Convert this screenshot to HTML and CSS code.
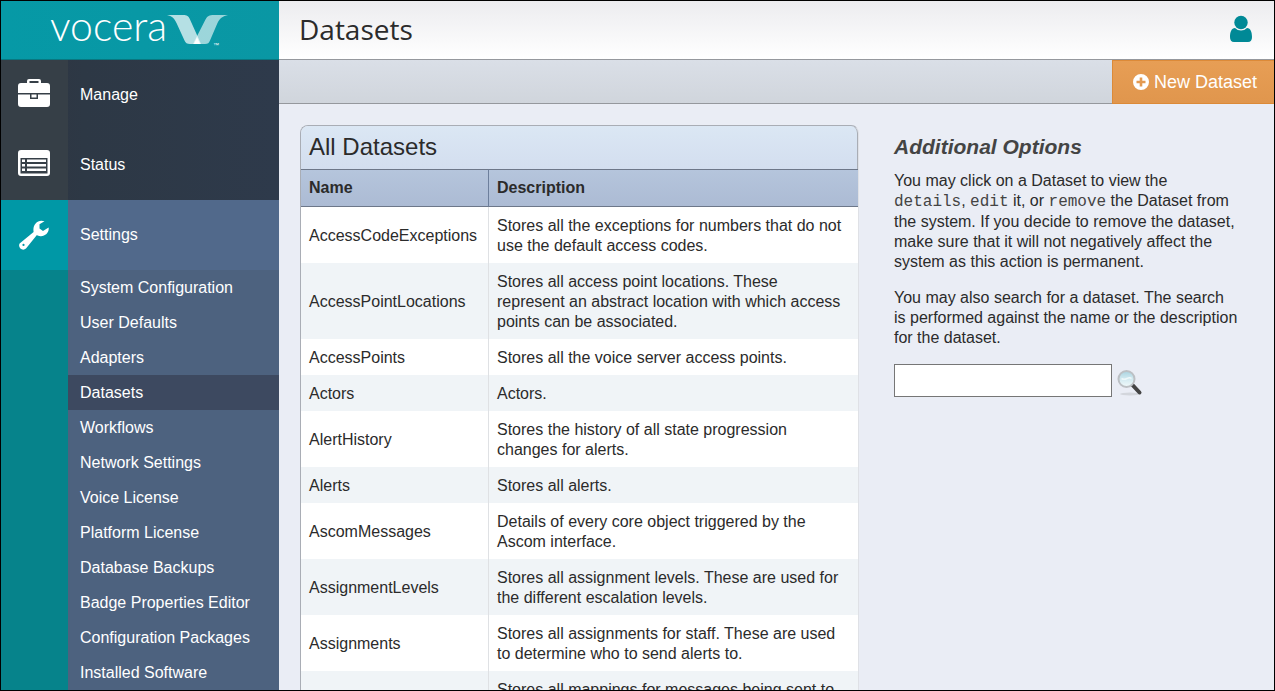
FILE: index.html
```html
<!DOCTYPE html>
<html lang="en">
<head>
  <meta charset="UTF-8" />
  <meta name="viewport" content="width=device-width, initial-scale=1" />
  <title>Datasets</title>
  <link rel="stylesheet" href="styles.css">
</head>
<body>

<div class="sidebar">
  <a href="#" class="logo">
    <span class="logo-text">vocera</span>
    <svg class="logo-mark" width="62" height="30" viewBox="0 0 62 30" aria-hidden="true">
      <path d="M0 0H16C20 0 21.500 1 23 4.500L34 29H23C20 29 18.500 28 17.500 25.500L9.500 8C7 3 5 1 0 0Z" fill="#fff" fill-opacity=".7"/>
      <path d="M61 0H47C42 0 40.500 1 38.500 4.500L26 29H38C41 29 42 28 43 25.500L50.500 8C53 3 56 1 61 0Z" fill="#fff" fill-opacity=".6"/>
      <path d="M30 22.500L33 29H27Z" fill="#fff"/>
    </svg>
    <span class="logo-tm">™</span>
  </a>

  <nav class="menu">
    <a href="#" class="menu-item">
      <span class="menu-icon">
        <svg width="34" height="30" viewBox="0 0 34 30" fill="#fff">
          <path fill-rule="evenodd" d="M10 5V3Q10 1 12 1H22Q24 1 24 3V5H30Q33 5 33 8V15H1V8Q1 5 4 5ZM12.500 3V5H21.500V3Z"/>
          <path fill-rule="evenodd" d="M1 16.500H13V21H21V16.500H33V26Q33 29 30 29H4Q1 29 1 26ZM14.500 16.500H19.500V19.500H14.500Z"/>
        </svg>
      </span>
      <span class="menu-label">Manage</span>
    </a>
    <a href="#" class="menu-item">
      <span class="menu-icon">
        <svg width="34" height="28" viewBox="0 0 34 28" fill="#fff">
          <path fill-rule="evenodd" d="M4 1H30Q33 1 33 4V24Q33 27 30 27H4Q1 27 1 24V4Q1 1 4 1ZM3.500 9V24.500H30.500V9Z"/>
          <path d="M5 10.500H8V13H5ZM10 10.500H29V13H10ZM5 15H8V17.500H5ZM10 15H29V17.500H10ZM5 19.500H8V22H5ZM10 19.500H29V22H10Z"/>
        </svg>
      </span>
      <span class="menu-label">Status</span>
    </a>
    <a href="#" class="menu-item open">
      <span class="menu-icon">
        <svg width="32" height="32" viewBox="0 0 32 32">
          <path fill="#fff" fill-rule="evenodd" d="M26.500 2.200L21.500 5.200V9.500L25 12L30.600 8.600C31.500 13 27.500 17.600 22.500 17.300C20.800 17.200 19.800 16.600 18.900 16.100L8 29.500C4.800 32.600-.6 28.800 1.600 24.600L15.600 13C14.300 6 19.500-.2 26.500 2.200ZM5.500 24.800A1.100 1.100 0 1 0 5.500 27A1.100 1.100 0 1 0 5.500 24.800Z"/>
        </svg>
      </span>
      <span class="menu-label">Settings</span>
    </a>
    <div class="submenu">
      <a href="#">System Configuration</a>
      <a href="#">User Defaults</a>
      <a href="#">Adapters</a>
      <a href="#" class="active">Datasets</a>
      <a href="#">Workflows</a>
      <a href="#">Network Settings</a>
      <a href="#">Voice License</a>
      <a href="#">Platform License</a>
      <a href="#">Database Backups</a>
      <a href="#">Badge Properties Editor</a>
      <a href="#">Configuration Packages</a>
      <a href="#">Installed Software</a>
    </div>
  </nav>
</div>

<div class="page">
  <header>
    <h1>Datasets</h1>
    <a href="#" class="user" aria-label="User">
      <svg width="24" height="28" viewBox="0 0 24 28" fill="#008996">
        <path d="M6 13C2.500 13 1 17 1 22Q1 27 5 27H19Q23 27 23 22C23 17 21.500 13 18 13Q15.500 15.500 12 15.500Q8.500 15.500 6 13Z"/>
        <circle cx="12" cy="7.500" r="6.700"/>
      </svg>
    </a>
  </header>

  <div class="toolbar">
    <button type="button" class="new-btn">
      <svg width="16" height="16" viewBox="0 0 16 16">
        <path fill="#fff" fill-rule="evenodd" d="M8 0A8 8 0 1 1 8 16A8 8 0 1 1 8 0ZM6.700 3.500V6.700H3.500V9.300H6.700V12.500H9.300V9.300H12.500V6.700H9.300V3.500Z"/>
      </svg>
      New Dataset
    </button>
  </div>

  <div class="content">
    <main>
      <h2>All Datasets</h2>
      <table>
        <thead>
          <tr><th class="name">Name</th><th>Description</th></tr>
        </thead>
        <tbody>
          <tr><td>AccessCodeExceptions</td><td>Stores all the exceptions for numbers that do not use the default access codes.</td></tr>
          <tr><td>AccessPointLocations</td><td>Stores all access point locations. These represent an abstract location with which access points can be associated.</td></tr>
          <tr><td>AccessPoints</td><td>Stores all the voice server access points.</td></tr>
          <tr><td>Actors</td><td>Actors.</td></tr>
          <tr><td>AlertHistory</td><td>Stores the history of all state progression changes for alerts.</td></tr>
          <tr><td>Alerts</td><td>Stores all alerts.</td></tr>
          <tr><td>AscomMessages</td><td>Details of every core object triggered by the Ascom interface.</td></tr>
          <tr><td>AssignmentLevels</td><td>Stores all assignment levels. These are used for the different escalation levels.</td></tr>
          <tr><td>Assignments</td><td>Stores all assignments for staff. These are used to determine who to send alerts to.</td></tr>
          <tr><td></td><td>Stores all mappings for messages being sent to</td></tr>
        </tbody>
      </table>
    </main>

    <aside>
      <h3>Additional Options</h3>
      <p>You may click on a Dataset to view the <code>details</code>, <code>edit</code> it, or <code>remove</code> the Dataset from the system. If you decide to remove the dataset, make sure that it will not negatively affect the system as this action is permanent.</p>
      <p>You may also search for a dataset. The search is performed against the name or the description for the dataset.</p>
      <form class="search">
        <input type="text" id="search" aria-label="Search datasets" />
        <button type="submit" aria-label="Search">
          <svg width="26" height="28" viewBox="0 0 26 28">
            <defs>
              <linearGradient id="glass" x1="0" y1="0" x2="0" y2="1">
                <stop offset="0" stop-color="#a9d3e0"/>
                <stop offset=".45" stop-color="#cfe8ef"/>
                <stop offset="1" stop-color="#f2fafb"/>
              </linearGradient>
            </defs>
            <ellipse cx="13" cy="26" rx="10" ry="1.500" fill="#d3d6dc"/>
            <path d="M15.500 17L22.500 24.500" stroke="#444" stroke-width="4" stroke-linecap="round"/>
            <circle cx="9.500" cy="11" r="8" fill="url(#glass)" stroke="#bcc0c4" stroke-width="2"/>
            <path d="M4.500 10.500Q7 12 10 10.500T14.500 10.500" fill="none" stroke="#eef8fa" stroke-width="1.500"/>
          </svg>
        </button>
      </form>
    </aside>
  </div>
</div>

</body>
</html>
```
FILE: styles.css
```css
* {
  box-sizing: border-box;
}
body {
  margin: 0;
  height: 100vh;
  border: 1px solid #000;
  background-color: #eaedf5;
  color: #2b2b2b;
  font-family: Arial, "Liberation Sans", sans-serif;
  font-size: 16px;
  line-height: 20px;
  display: flex;
  overflow: hidden;
}
a {
  color: #fff;
  text-decoration: none;
}
h1, h2, h3, p {
  margin: 0;
}

/* sidebar */
.sidebar {
  flex: 0 0 278px;
  display: flex;
  flex-direction: column;
  background: linear-gradient(to right, #06838b 67px, #4d627f 67px);
}
.logo {
  flex: none;
  height: 59px;
  display: flex;
  align-items: center;
  padding-left: 49px;
  background: linear-gradient(to right, #0699a6, #0a97a4);
  border-bottom: 1px solid #087780;
}
.logo-text {
  width: 117px;
  font-family: Lato, sans-serif;
  font-size: 41px;
  font-weight: 300;
  line-height: 44px;
  padding-bottom: 8px;
  color: #fff;
}
.logo-tm {
  align-self: flex-end;
  margin-left: -16px;
  padding-bottom: 4px;
  font-size: 6px;
}
.menu-item {
  display: flex;
  height: 70px;
  background: linear-gradient(to right, #2f3541, #2d3845 30%, #2e3a4b);
}
.menu-icon {
  flex: 0 0 67px;
  display: flex;
  align-items: center;
  justify-content: center;
  padding: 0 2px 4px 0;
  background-color: #363f47;
}
.menu-label {
  flex: 1;
  display: flex;
  align-items: center;
  padding-left: 12px;
}
.menu-item.open .menu-icon {
  padding-bottom: 0;
  background-color: #0098a6;
}
.menu-item.open .menu-label {
  background-color: #51698b;
}
.submenu {
  margin-left: 67px;
}
.submenu a {
  display: flex;
  align-items: center;
  height: 35px;
  padding-left: 12px;
}
.submenu a.active {
  background-color: #3d4960;
}

/* page */
.page {
  flex: 1;
  min-width: 0;
}
header {
  height: 59px;
  display: flex;
  align-items: center;
  justify-content: space-between;
  padding: 0 21px 2px 20px;
  background: linear-gradient(#ececef, #fff);
  border-bottom: 1px solid #95989d;
}
h1 {
  font-family: "Open Sans", sans-serif;
  font-size: 28px;
  font-weight: normal;
  line-height: 38px;
}
.user svg {
  display: block;
}
.toolbar {
  height: 44px;
  display: flex;
  justify-content: flex-end;
  background: linear-gradient(#dadfe7, #d0d5dc);
  border-bottom: 1px solid #95989d;
}
.new-btn {
  display: flex;
  align-items: center;
  gap: 5px;
  height: 44px;
  padding: 0 17px 0 20px;
  border: 1px solid #dc8a38;
  border-right: none;
  background: linear-gradient(#e79e55, #e0964d);
  color: #fff;
  font-family: inherit;
  font-size: 18px;
  cursor: pointer;
}
.content {
  display: flex;
  align-items: flex-start;
  gap: 35px;
  padding: 21px 35px 0 21px;
}
main {
  flex: 1;
  border: 1px solid #a9adb5;
  border-right-color: #dfe1e6;
  border-radius: 8px 8px 0 0;
}
h2 {
  height: 43px;
  padding: 0 8px;
  border-right: 1px solid #a9adb5;
  border-radius: 7px 7px 0 0;
  background: linear-gradient(#dbe7f4, #d3deef);
  font-size: 24px;
  font-weight: normal;
  line-height: 42px;
}
table {
  width: 100%;
  border-collapse: separate;
  border-spacing: 0;
}
th, td {
  padding: 8px;
  text-align: left;
}
th {
  height: 38px;
  background: linear-gradient(#b5c5dc, #acbbd4);
  border-top: 1px solid #6d7789;
  border-bottom: 1px solid #6d7789;
}
th.name {
  width: 188px;
  border-right: 1px solid #6d7f9c;
}
td {
  padding: 9px 10px 7px 8px;
  background-color: #fff;
}
td:first-child {
  border-right: 1px solid #dfe1e4;
}
tbody tr:nth-child(even) td {
  background-color: #f0f4f7;
}

/* side help */
aside {
  flex: 0 0 345px;
  padding-top: 12px;
}
h3 {
  margin-bottom: 14px;
  color: #444;
  font-size: 21px;
  font-style: italic;
}
aside p {
  margin-bottom: 16px;
}
code {
  color: #444;
  font-family: "Liberation Mono", "Courier New", monospace;
  font-size: 16px;
}
.search {
  display: flex;
  align-items: center;
  gap: 5px;
}
.search input {
  width: 218px;
  height: 33px;
  padding: 4px 8px;
  border: 1px solid #767676;
  background-color: #fff;
  font-size: 16px;
}
.search button {
  padding: 2px 0 0;
  border: none;
  background: none;
  cursor: pointer;
}
.search svg {
  display: block;
}
```
